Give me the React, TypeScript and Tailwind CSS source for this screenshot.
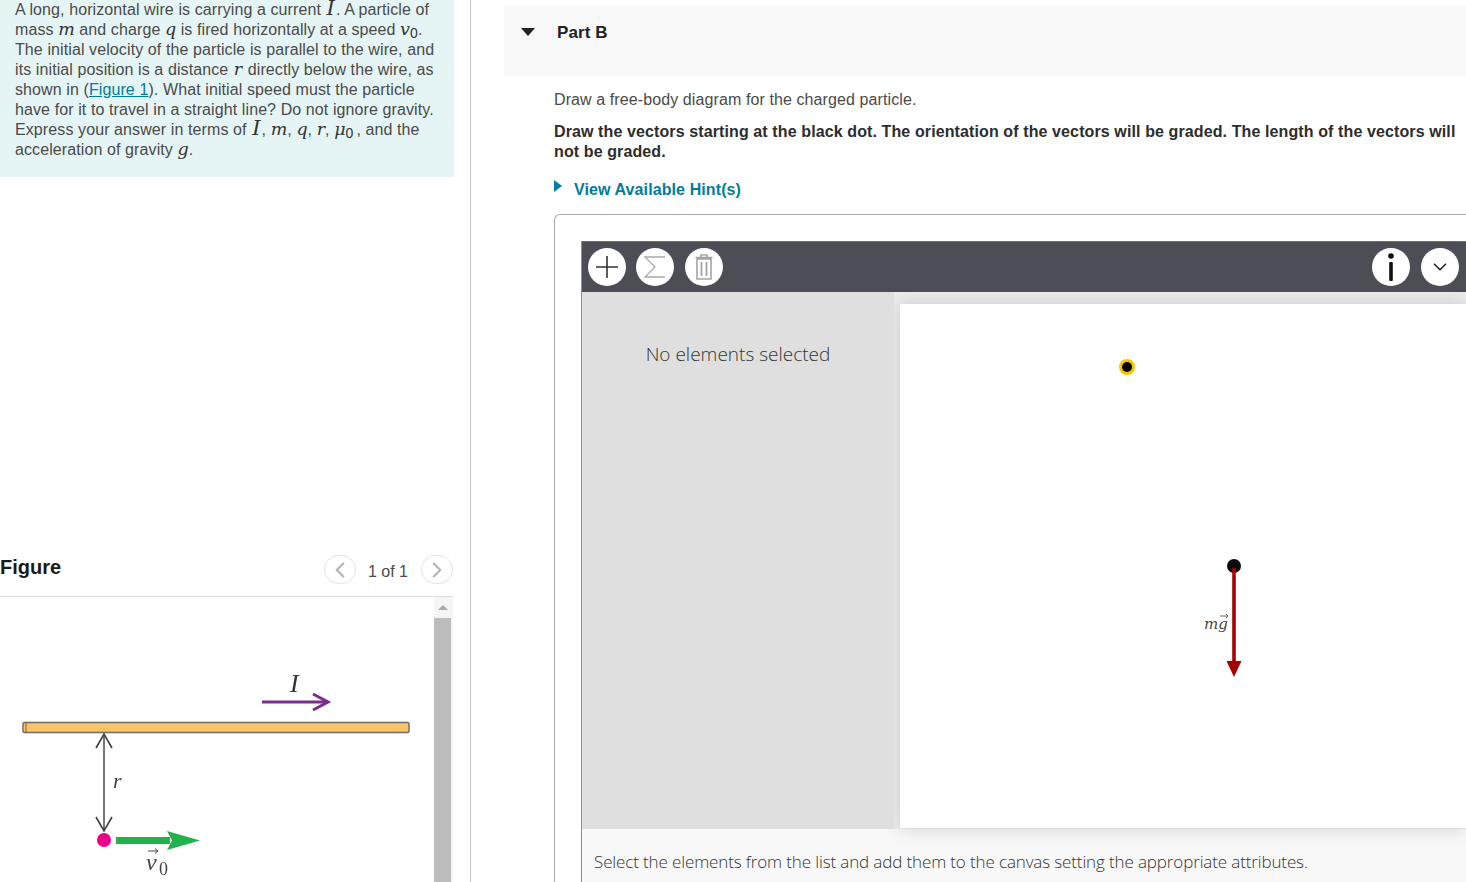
import { ChevronDown, ChevronLeft, ChevronRight } from 'lucide-react';
import type { ReactNode } from 'react';

const Mi = ({ children }: { children: ReactNode }) => (
  <i className="font-['DejaVu_Serif',serif] text-[17.5px] leading-[0] text-[#333] tracking-normal">{children}</i>
);

const BigI = () => (
  <i className="font-['DejaVu_Serif',serif] text-[21px] leading-[0] text-[#333] mx-[1px]">I</i>
);

const Sub0 = () => <span className="text-[14px] leading-[0] align-[-3px] text-[#333]">0</span>;

const Line = ({ children }: { children: ReactNode }) => (
  <div className="h-[20px] whitespace-nowrap">{children}</div>
);

function Problem() {
  return (
    <div className="w-[454px] h-[177px] shrink-0 bg-[#e5f5f6] pl-[15px] text-[16px] leading-[20px] text-[#4a4a4a] tracking-[0.1px]">
      <Line>A long, horizontal wire is carrying a current <BigI />. A particle of</Line>
      <Line>mass <Mi>m</Mi> and charge <Mi>q</Mi> is fired horizontally at a speed <Mi>v</Mi><Sub0 />.</Line>
      <Line>The initial velocity of the particle is parallel to the wire, and</Line>
      <Line>its initial position is a distance <span className="mx-[1px]"><Mi>r</Mi></span> directly below the wire, as</Line>
      <Line>shown in (<a className="text-[#007c9c] underline">Figure 1</a>). What initial speed must the particle</Line>
      <Line>have for it to travel in a straight line? Do not ignore gravity.</Line>
      <Line>Express your answer in terms of <BigI />, <Mi>m</Mi>, <Mi>q</Mi>, <Mi>r</Mi>, <Mi>μ</Mi><Sub0 /><span className="ml-[3px]">, and the</span></Line>
      <Line>acceleration of gravity <Mi>g</Mi>.</Line>
    </div>
  );
}

function FigureDrawing() {
  return (
    <svg width="434" height="285" viewBox="0 597 434 285" className="block blur-[0.3px]">
      <rect x="23" y="722.5" width="386" height="10" rx="1.5" fill="#fcc468" stroke="#6f6a60" strokeWidth="1.4" />
      <line x1="26" y1="723" x2="26" y2="732" stroke="#8d7445" strokeWidth="1.2" />
      <text x="290" y="692" fontFamily="Liberation Serif" fontStyle="italic" fontSize="26" fill="#333">I</text>
      <line x1="262" y1="702" x2="327" y2="702" stroke="#7b2d8e" strokeWidth="3" />
      <path d="M313 694 L328 702 L313 710" fill="none" stroke="#7b2d8e" strokeWidth="3" />
      <line x1="104" y1="734" x2="104" y2="831" stroke="#4a4a4a" strokeWidth="1.5" />
      <path d="M96 748 L104 734 L112 748 M96 817 L104 831 L112 817" fill="none" stroke="#3f3f3f" strokeWidth="1.6" />
      <text x="113" y="788" fontFamily="Liberation Serif" fontStyle="italic" fontSize="22" fill="#444">r</text>
      <circle cx="104" cy="840" r="7" fill="#ec008c" />
      <rect x="116" y="837" width="54" height="7" fill="#22b14c" />
      <path d="M167 831 L200 840.5 L167 850 L172 840.5 Z" fill="#22b14c" />
      <text x="146" y="870" fontFamily="Liberation Serif" fontStyle="italic" fontSize="24" fill="#444">v</text>
      <path d="M148 851 L158 851 M155 848.5 L158 851 L155 853.5" fill="none" stroke="#444" strokeWidth="1" />
      <text x="159" y="875" fontFamily="Liberation Serif" fontSize="18" fill="#444">0</text>
    </svg>
  );
}

function FigurePanel() {
  return (
    <div className="w-[453px]">
      <div className="h-[42px] border-b border-[#dcdcdc] flex items-start justify-between">
        <span className="text-[20px] font-bold leading-[24px] text-[#1a1a1a]">Figure</span>
        <div className="flex items-start text-[16px] leading-[24px] text-[#4a4a4a]">
          <div className="w-[32px] h-[29px] rounded-full border border-[#e3e3e3] flex items-center justify-center">
            <ChevronLeft size={26} strokeWidth={2} className="text-[#b5b5b5]" />
          </div>
          <span className="ml-[12px] mr-[13px] mt-[5px]">1 of 1</span>
          <div className="w-[32px] h-[29px] rounded-full border border-[#e3e3e3] flex items-center justify-center">
            <ChevronRight size={26} strokeWidth={2} className="text-[#b5b5b5]" />
          </div>
        </div>
      </div>
      <div className="flex h-[285px]">
        <FigureDrawing />
        <div className="w-[19px] bg-[#f5f5f5] pr-[2px]">
          <div className="h-[21px] flex items-center justify-center">
            <div className="w-0 h-0 border-x-[5px] border-x-transparent border-b-[5px] border-b-[#a9a9a9]" />
          </div>
          <div className="h-[264px] bg-[#bcbcbc]" />
        </div>
      </div>
    </div>
  );
}

const Round = ({ children }: { children: ReactNode }) => (
  <div className="w-[38px] h-[38px] rounded-full bg-white flex items-center justify-center shrink-0">{children}</div>
);

function Toolbar() {
  return (
    <div className="relative z-10 h-[51px] bg-[#4d4d55] border-t border-[#6d6d73] flex items-center justify-between pl-[6px] pr-[7px]">
      <div className="flex items-center gap-[10px]">
        <Round>
          <svg width="24" height="24" viewBox="0 0 24 24">
            <path d="M12 1 V23 M1 12 H23" stroke="#333" strokeWidth="1.6" fill="none" />
          </svg>
        </Round>
        <Round>
          <svg width="24" height="26" viewBox="0 0 24 26">
            <path d="M22 3 H2 L12 13 L2 23 H22" stroke="#aaa" strokeWidth="1.3" fill="none" />
          </svg>
        </Round>
        <div className="ml-[1px]">
          <Round>
            <svg width="20" height="28" viewBox="0 0 20 28">
              <path d="M3 6 H17 V26 H3 Z M1.5 4.5 H18.5 M7 4.5 V2 H13 V4.5" stroke="#a5a5a5" strokeWidth="1.6" fill="none" />
              <path d="M7.5 9 V23 M12.5 9 V23" stroke="#a5a5a5" strokeWidth="1.8" fill="none" />
            </svg>
          </Round>
        </div>
      </div>
      <div className="flex items-center gap-[11px]">
        <Round>
          <svg width="8" height="28" viewBox="0 0 8 28">
            <circle cx="4" cy="3" r="2.8" fill="#111" />
            <rect x="2.2" y="9" width="3.6" height="19" rx="1" fill="#111" />
          </svg>
        </Round>
        <Round>
          <ChevronDown size={22} strokeWidth={1.8} className="text-[#222]" />
        </Round>
      </div>
    </div>
  );
}

function DrawingCanvas() {
  return (
    <div className="relative flex-1 bg-white shadow-[0_0_18px_rgba(0,0,0,0.16)]">
      <svg className="absolute left-[218px] top-[54px]" width="18" height="18" viewBox="0 0 18 18">
        <circle cx="9" cy="9" r="8" fill="#f9c500" />
        <circle cx="9" cy="9" r="5" fill="#000" />
      </svg>
      <svg className="absolute left-[296px] top-[252px]" width="60" height="126" viewBox="0 0 60 126">
        <circle cx="38" cy="10" r="7" fill="#0a0a0a" className="blur-[0.5px]" />
        <rect x="36.2" y="12" width="3.6" height="96" fill="#a80000" />
        <path d="M30.5 105 H45.5 L38 121 Z" fill="#a80000" />
        <text x="8" y="73" fontFamily="DejaVu Serif" fontStyle="italic" fontSize="15" fill="#444">mg</text>
        <path d="M24 60 H32 M30 58 L32 60 L30 62" stroke="#444" strokeWidth="0.8" fill="none" />
      </svg>
    </div>
  );
}

function Workspace() {
  return (
    <div className="border border-r-0 border-[#a9a9a9] rounded-tl-[6px] pl-[26px] pt-[26px] mt-[14px] h-[700px]">
      <div className="border-l border-[#8e8e8e] h-full">
        <Toolbar />
        <div className="flex h-[537px] bg-[#ededed]">
          <div className="relative z-10 w-[312px] bg-[#dfdfdf] shrink-0 text-center pt-[49px] font-['Open_Sans',sans-serif] font-light text-[19px] leading-[26px] text-[#333]">
            No elements selected
          </div>
          <div className="flex flex-1 pl-[6px] pt-[12px] pb-[1px]">
            <DrawingCanvas />
          </div>
        </div>
        <div className="bg-[#f8f8f8] pl-[12px] pt-[20px] font-['Open_Sans',sans-serif] font-light text-[17px] tracking-[-0.13px] leading-[26px] text-[#333] h-[200px] whitespace-nowrap">
          Select the elements from the list and add them to the canvas setting the appropriate attributes.
        </div>
      </div>
    </div>
  );
}

function PartB() {
  return (
    <div className="flex-1 min-w-0 pl-[33px] pt-[5px]">
      <div className="h-[71px] bg-[#f9f9f9] flex items-start pl-[17px] pt-[18px]">
        <div className="w-0 h-0 mt-[5px] border-x-[7px] border-x-transparent border-t-[8px] border-t-[#222]" />
        <span className="ml-[22px] text-[17px] tracking-[0.1px] font-bold leading-[20px] text-[#222]">Part B</span>
      </div>
      <div className="pl-[50px] text-[16px] leading-[20px] text-[#4a4a4a]">
        <p className="mt-[14px] tracking-[0.1px]">Draw a free-body diagram for the charged particle.</p>
        <p className="mt-[12px] font-bold text-[#2d2d2d] tracking-[0.11px]">
          Draw the vectors starting at the black dot. The orientation of the vectors will be graded. The length of the vectors will not be graded.
        </p>
        <div className="flex items-start mt-[18px]">
          <div className="w-0 h-0 border-y-[6.5px] border-y-transparent border-l-[8px] border-l-[#007c9c]" />
          <span className="ml-[12px] font-bold tracking-[0.1px] text-[#007c9c]">View Available Hint(s)</span>
        </div>
        <Workspace />
      </div>
    </div>
  );
}

export default function App() {
  return (
    <div className="w-[1466px] h-[882px] overflow-hidden flex bg-white font-['Liberation_Sans',Arial,sans-serif]">
      <div className="w-[471px] shrink-0 border-r border-[#b9cddd] flex flex-col justify-between">
        <Problem />
        <FigurePanel />
      </div>
      <PartB />
    </div>
  );
}
